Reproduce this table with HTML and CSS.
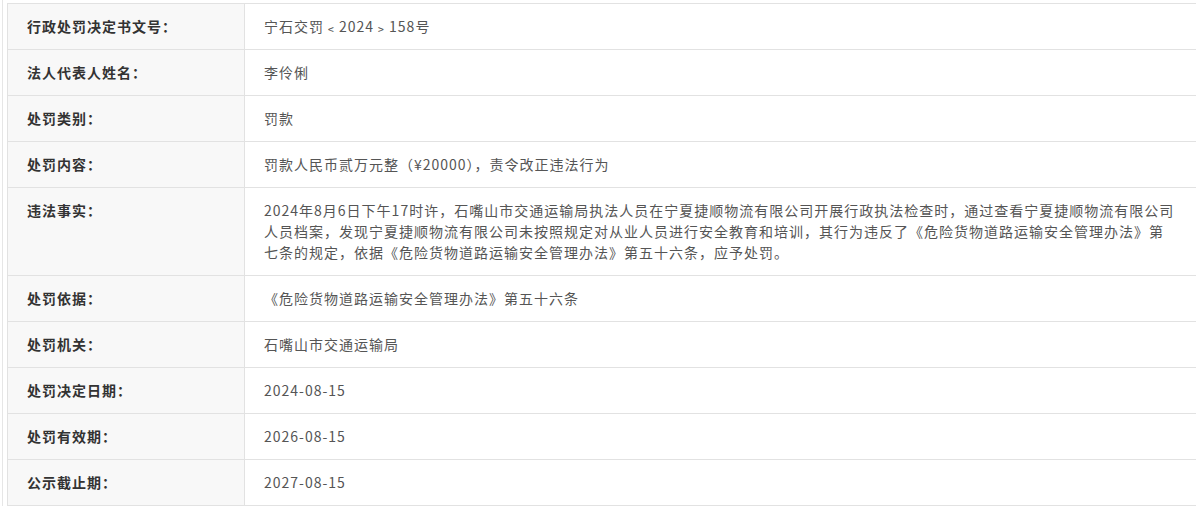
FILE: index.html
```html
<!DOCTYPE html>
<html lang="zh-CN">
<head>
    <meta charset="UTF-8">
    <title>行政处罚信息</title>
    <link rel="stylesheet" href="styles.css">
</head>
<body>
    <div class="detail-wrap">
        <table class="detail-table">
            <tr>
                <th>行政处罚决定书文号：</th>
                <td>宁石交罚﹤2024﹥158号</td>
            </tr>
            <tr>
                <th>法人代表人姓名：</th>
                <td>李伶俐</td>
            </tr>
            <tr>
                <th>处罚类别：</th>
                <td>罚款</td>
            </tr>
            <tr>
                <th>处罚内容：</th>
                <td>罚款人民币贰万元整（¥20000），责令改正违法行为</td>
            </tr>
            <tr>
                <th>违法事实：</th>
                <td>2024年8月6日下午17时许，石嘴山市交通运输局执法人员在宁夏捷顺物流有限公司开展行政执法检查时，通过查看宁夏捷顺物流有限公司人员档案，发现宁夏捷顺物流有限公司未按照规定对从业人员进行安全教育和培训，其行为违反了《危险货物道路运输安全管理办法》第七条的规定，依据《危险货物道路运输安全管理办法》第五十六条，应予处罚。</td>
            </tr>
            <tr>
                <th>处罚依据：</th>
                <td>《危险货物道路运输安全管理办法》第五十六条</td>
            </tr>
            <tr>
                <th>处罚机关：</th>
                <td>石嘴山市交通运输局</td>
            </tr>
            <tr>
                <th>处罚决定日期：</th>
                <td>2024-08-15</td>
            </tr>
            <tr>
                <th>处罚有效期：</th>
                <td>2026-08-15</td>
            </tr>
            <tr>
                <th>公示截止期：</th>
                <td>2027-08-15</td>
            </tr>
        </table>
    </div>
</body>
</html>
```

FILE: styles.css
```css
body {
    margin: 0;
    background: #fff;
    font-family: "Noto Sans CJK SC", "Noto Sans", sans-serif;
    overflow: hidden;
}
.detail-wrap {
    margin-left: 2px;
    padding: 3px 0 0 4px;
    border-left: 1px solid #e6e6e6;
}
.detail-table {
    border-collapse: collapse;
    width: 1190px;
    font-size: 14px;
    letter-spacing: 1px;
    line-height: 21px;
}
.detail-table th,
.detail-table td {
    border: 1px solid #e2e2e2;
    padding: 12px 20px 12px 19px;
    vertical-align: top;
    text-align: left;
}
.detail-table th {
    width: 197px;
    background: #f8f8f8;
    color: #333;
    font-weight: bold;
}
.detail-table td {
    color: #555;
    font-weight: normal;
    border-right-style: hidden;
}
```
